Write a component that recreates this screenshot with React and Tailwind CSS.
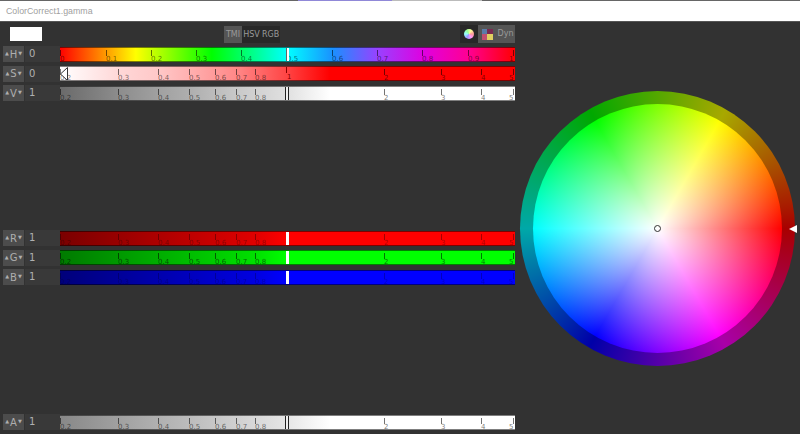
const logTicks = [
  [0, "0.2"],
  [58, "0.3"],
  [98, "0.4"],
  [129, "0.5"],
  [155, "0.6"],
  [176, "0.7"],
  [195, "0.8"],
  [324, "2"],
  [381, "3"],
  [421, "4"],
  [453, "5"],
];

const hueTicks = [
  [0, "0"],
  [46, "0.1"],
  [91, "0.2"],
  [136, "0.3"],
  [181, "0.4"],
  [227, "0.5"],
  [272, "0.6"],
  [317, "0.7"],
  [362, "0.8"],
  [408, "0.9"],
  [453, "1"],
];

function Bar({ bg, ticks, tone, handle }) {
  return (
    <div className={`relative w-[455px] h-[15px] border-y border-black/50 overflow-hidden ${bg}`}>
      {ticks.map(([x, label]) => (
        <div key={label} className={`absolute top-[2px] ${tone}`} style={{ left: x }}>
          <div className="w-px h-[6px] bg-current"></div>
          <div className={`absolute top-[5px] text-[7px] leading-[8px] whitespace-nowrap ${x > 440 ? "-left-[4px]" : "left-0"}`}>
            {label}
          </div>
        </div>
      ))}
      {handle}
    </div>
  );
}

function Row({ name, value, bar }) {
  return (
    <div className="flex items-center h-[16px]">
      <div className="ml-[3px] w-[21px] h-[16px] flex items-center justify-center gap-px bg-[#4c4c4c] text-[#aeaeae] text-[10px]">
        <span className="text-[5px]">▲</span>
        {name}
        <span className="text-[5px]">▼</span>
      </div>
      <div className="ml-[1px] w-[35px] h-[16px] pl-[4px] bg-[#393939] text-[#b0b0b0] text-[10px] leading-[16px]">{value}</div>
      {bar}
    </div>
  );
}

const whiteHandle = <div className="absolute -top-px left-[226px] w-[3px] h-[16px] bg-white"></div>;
const hueHandle = <div className="absolute -top-px left-[226px] w-[3px] h-[16px] bg-white border-l border-black/60"></div>;
const greyHandle = <div className="absolute -top-px left-[225px] w-[4px] h-[16px] bg-[#f0f0f0] border-x border-[#222]"></div>;
const satHandle = (
  <>
    <div className="absolute top-0 left-[226px] w-px h-[6px] bg-[#800]"></div>
    <div className="absolute top-[6px] left-[227px] text-[7px] leading-[8px] text-[#800]">1</div>
    <svg className="absolute top-0 left-0" width="9" height="14" viewBox="0 0 9 14">
      <path d="M0.5 7 L7.5 0.5 L7.5 13.5 Z" fill="#fff" stroke="#333" />
    </svg>
  </>
);

export default function App() {
  return (
    <div className="w-[800px] h-[434px] flex flex-col overflow-hidden bg-[#323232] font-['DejaVu_Sans',sans-serif]">
      <div className="h-px shrink-0 flex bg-[#666]">
        <div className="ml-[298px] w-[94px] bg-[#9088d8]"></div>
        <div className="w-[90px] bg-[#bbbbbb]"></div>
      </div>
      <div className="h-[21px] shrink-0 pl-[6px] bg-white text-[#a0a0a0] text-[8.8px] leading-[21px] font-['Liberation_Sans',sans-serif] border-b border-[#555]">
        ColorCorrect1.gamma
      </div>

      <div className="flex flex-1 min-h-0">
        <div className="w-[515px] shrink-0 flex flex-col">
          <div className="h-[24px] relative flex items-center">
            <div className="ml-[10px] w-[33px] h-[14px] bg-white"></div>
            <div className="ml-[182px] h-[17px] flex text-[8px] leading-[17px] text-[#9a9a9a] bg-[#282828]">
              <div className="w-[18px] text-center bg-[#555]">TMI</div>
              <div className="w-[19px] text-center">HSV</div>
              <div className="w-[19px] text-center">RGB</div>
            </div>
            <div className="ml-[180px] h-[18px] flex text-[8px] leading-[18px] text-[#9a9a9a]">
              <div className="w-[18px] flex items-center justify-center bg-[#282828]">
                <div className="w-[10px] h-[10px] rounded-full bg-[conic-gradient(from_90deg,#f99,#f9f,#99f,#9ff,#9f9,#ff9,#f99)]"></div>
              </div>
              <div className="w-[18px] flex items-center justify-center bg-[#555]">
                <div className="w-[11px] h-[11px] grid grid-cols-2">
                  <div className="bg-[#5a7ca8]"></div>
                  <div className="bg-[#7a2a50]"></div>
                  <div className="bg-[#c05070]"></div>
                  <div className="bg-[#e0d060]"></div>
                </div>
              </div>
              <div className="w-[19px] text-center bg-[#555]">Dyn</div>
            </div>
          </div>

          <div className="flex flex-col gap-[3.5px]">
            <Row
              name="H"
              value="0"
              bar={
                <Bar
                  bg="bg-[linear-gradient(to_right,#f00,#ff0_16.67%,#0f0_33.33%,#0ff_50%,#1a90ff_60%,#9a40ff_70%,#e000e0_80%,#ff0090_90%,#f00)]"
                  ticks={hueTicks}
                  tone="text-black/55"
                  handle={hueHandle}
                />
              }
            />
            <Row
              name="S"
              value="0"
              bar={
                <Bar
                  bg="bg-[linear-gradient(to_right,#fff,#ffd8d8_12.7%,#ffc8c8_21.5%,#ffb0b0_28.4%,#ff8888_38.7%,#ff4444_49.9%,#f00_59.3%)]"
                  ticks={logTicks}
                  tone="text-black/55"
                  handle={satHandle}
                />
              }
            />
            <Row
              name="V"
              value="1"
              bar={
                <Bar
                  bg="bg-[linear-gradient(to_right,#6a6a6a,#8c8c8c_12.7%,#a0a0a0_21.5%,#aeaeae_28.4%,#c8c8c8_38.7%,#e0e0e0_49.9%,#fff_59.3%)]"
                  ticks={logTicks}
                  tone="text-black/55"
                  handle={greyHandle}
                />
              }
            />
          </div>

          <div className="mt-[129px] flex flex-col gap-[3.5px]">
            <Row
              name="R"
              value="1"
              bar={
                <Bar
                  bg="bg-[linear-gradient(to_right,#7a0000,#e00000_43%,#f00_50%)]"
                  ticks={logTicks}
                  tone="text-black/35"
                  handle={whiteHandle}
                />
              }
            />
            <Row
              name="G"
              value="1"
              bar={
                <Bar
                  bg="bg-[linear-gradient(to_right,#007a00,#00e000_43%,#0f0_50%)]"
                  ticks={logTicks}
                  tone="text-black/55"
                  handle={whiteHandle}
                />
              }
            />
            <Row
              name="B"
              value="1"
              bar={
                <Bar
                  bg="bg-[linear-gradient(to_right,#00007a,#0000e0_43%,#00f_50%)]"
                  ticks={logTicks}
                  tone="text-black/25"
                  handle={whiteHandle}
                />
              }
            />
          </div>

          <div className="mt-[129px]">
            <Row
              name="A"
              value="1"
              bar={
                <Bar
                  bg="bg-[linear-gradient(to_right,#888,#a0a0a0_12.7%,#b0b0b0_21.5%,#bcbcbc_28.4%,#d0d0d0_38.7%,#e6e6e6_49.9%,#fff_59.3%)]"
                  ticks={logTicks}
                  tone="text-black/55"
                  handle={greyHandle}
                />
              }
            />
          </div>
        </div>

        <div className="relative ml-[5px] mt-[69px] w-[275px] h-[275px] shrink-0">
          <div className="w-full h-full p-[13px] rounded-full bg-[conic-gradient(from_90deg,#a80000,#a800a8,#0000a8,#00a8a8,#00a800,#a8a800,#a80000)]">
            <div className="relative w-full h-full rounded-full overflow-hidden bg-[conic-gradient(from_90deg,#f00,#f0f,#00f,#0ff,#0f0,#ff0,#f00)]">
              <div className="w-full h-full bg-[radial-gradient(closest-side,#fff,#fff0)]"></div>
            </div>
          </div>
          <div className="absolute left-[134px] top-[134px] w-[7px] h-[7px] rounded-full border border-[#333]"></div>
          <svg className="absolute left-[269px] top-[134px]" width="8" height="8" viewBox="0 0 8 8">
            <path d="M0 4 L8 0 L8 8 Z" fill="#fff" />
          </svg>
        </div>
      </div>
    </div>
  );
}
